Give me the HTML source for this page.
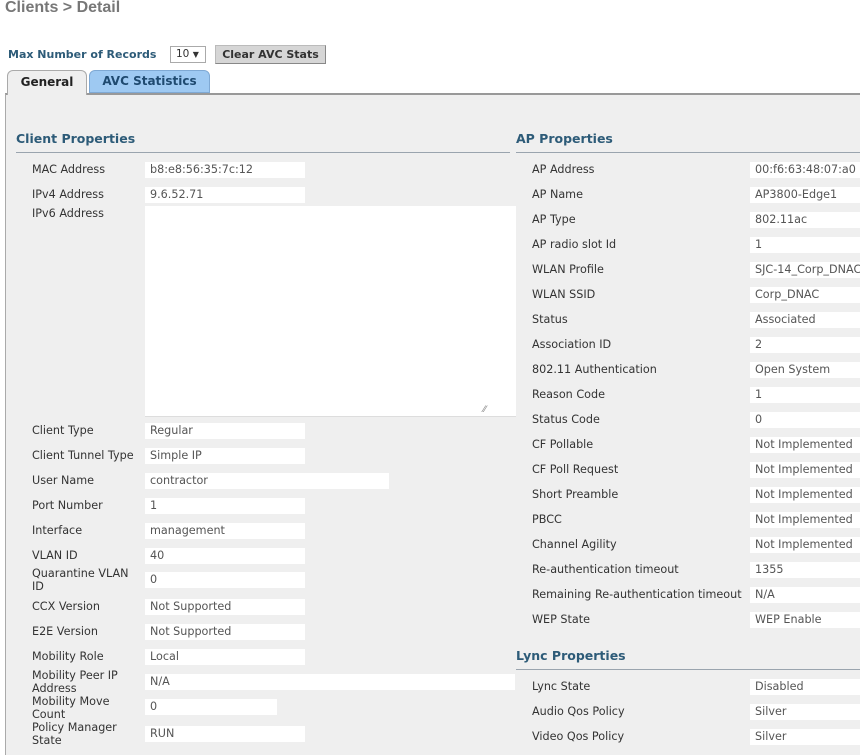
<!DOCTYPE html>
<html><head><meta charset="utf-8"><style>
body{margin:0;width:860px;height:745px;overflow:hidden;background:#fff;font-family:"DejaVu Sans",Verdana,sans-serif;font-size:11.2px;color:#333;position:relative}
.a{position:absolute;white-space:nowrap}
#panel{position:absolute;left:5px;top:93px;width:860px;height:660px;background:#efefef;border-top:2px solid #999;border-left:1px solid #aaa}
.h{position:absolute;font-weight:bold;font-size:12.5px;color:#2d5b78;margin-top:1px}
.ln{position:absolute;height:1px;background:#9aa4ae}
.lb{position:absolute;line-height:13px;margin-top:1px}
.v{position:absolute;background:#fff;height:16px;line-height:16px;padding-left:5px;color:#555;box-sizing:border-box;white-space:nowrap;overflow:hidden;margin-top:1px}
</style></head><body>
<div class="a" style="left:5px;top:-1px;font-family:'Liberation Sans',Arial,sans-serif;font-weight:bold;font-size:16px;line-height:18px;color:#777">Clients &gt; Detail</div>
<div class="a" style="left:8px;top:48px;font-weight:bold;font-size:11px;color:#2d5b78">Max Number of Records</div>
<div class="a" style="left:170px;top:46px;width:36px;height:17px;border:1px solid #aaa;box-sizing:border-box;background:#fff;font-size:10.5px;line-height:15px;padding-left:5px">10 <span style="font-size:8px">▼</span></div>
<div class="a" style="left:215px;top:45px;width:111px;height:19px;background:#d6d6d6;border:1px solid #bbb;border-right-color:#888;border-bottom-color:#888;box-sizing:border-box;font-weight:bold;font-size:11px;line-height:17px;text-align:center;color:#333">Clear AVC Stats</div>
<div id="panel"></div>
<div class="a" style="left:7px;top:70px;width:80px;height:25px;background:#efefef;border:1px solid #aaa;border-bottom:none;border-radius:6px 6px 0 0;box-sizing:border-box;font-weight:bold;font-size:12px;text-align:center;line-height:22px;color:#222">General</div>
<div class="a" style="left:89px;top:70px;width:121px;height:23px;background:#9ec9f2;border:1px solid #7fa9d4;border-radius:6px 6px 0 0;box-sizing:border-box;font-weight:bold;font-size:12px;text-align:center;line-height:21px;color:#1f4a70">AVC Statistics</div>

<div class="h" style="left:16px;top:130px">Client Properties</div>
<div class="ln" style="left:16px;top:152px;width:494px"></div>
<div class="h" style="left:516px;top:130px">AP Properties</div>
<div class="ln" style="left:516px;top:152px;width:344px"></div>

<div class="lb" style="left:32px;top:162px">MAC Address</div><div class="v" style="left:145px;top:161px;width:160px">b8:e8:56:35:7c:12</div>
<div class="lb" style="left:32px;top:187px">IPv4 Address</div><div class="v" style="left:145px;top:186px;width:160px">9.6.52.71</div>
<div class="lb" style="left:32px;top:206px">IPv6 Address</div>
<div class="a" style="left:145px;top:206px;width:371px;height:210px;background:#fff;border-bottom:1px solid #ddd"><span style="position:absolute;right:30px;bottom:1px;color:#888;font-size:9px">⁄⁄</span></div>
<div class="lb" style="left:32px;top:423px">Client Type</div><div class="v" style="left:145px;top:422px;width:160px">Regular</div>
<div class="lb" style="left:32px;top:448px">Client Tunnel Type</div><div class="v" style="left:145px;top:447px;width:160px">Simple IP</div>
<div class="lb" style="left:32px;top:473px">User Name</div><div class="v" style="left:145px;top:472px;width:244px">contractor</div>
<div class="lb" style="left:32px;top:498px">Port Number</div><div class="v" style="left:145px;top:497px;width:160px">1</div>
<div class="lb" style="left:32px;top:523px">Interface</div><div class="v" style="left:145px;top:522px;width:160px">management</div>
<div class="lb" style="left:32px;top:548px">VLAN ID</div><div class="v" style="left:145px;top:547px;width:160px">40</div>
<div class="lb" style="left:32px;top:566px">Quarantine VLAN<br>ID</div><div class="v" style="left:145px;top:571px;width:160px">0</div>
<div class="lb" style="left:32px;top:599px">CCX Version</div><div class="v" style="left:145px;top:598px;width:160px">Not Supported</div>
<div class="lb" style="left:32px;top:624px">E2E Version</div><div class="v" style="left:145px;top:623px;width:160px">Not Supported</div>
<div class="lb" style="left:32px;top:649px">Mobility Role</div><div class="v" style="left:145px;top:648px;width:160px">Local</div>
<div class="lb" style="left:32px;top:668px">Mobility Peer IP<br>Address</div><div class="v" style="left:145px;top:673px;width:370px">N/A</div>
<div class="lb" style="left:32px;top:694px">Mobility Move<br>Count</div><div class="v" style="left:145px;top:698px;width:132px">0</div>
<div class="lb" style="left:32px;top:720px">Policy Manager<br>State</div><div class="v" style="left:145px;top:725px;width:160px">RUN</div>

<div class="lb" style="left:532px;top:162px">AP Address</div><div class="v" style="left:750px;top:161px;width:115px">00:f6:63:48:07:a0</div>
<div class="lb" style="left:532px;top:187px">AP Name</div><div class="v" style="left:750px;top:186px;width:115px">AP3800-Edge1</div>
<div class="lb" style="left:532px;top:212px">AP Type</div><div class="v" style="left:750px;top:211px;width:115px">802.11ac</div>
<div class="lb" style="left:532px;top:237px">AP radio slot Id</div><div class="v" style="left:750px;top:236px;width:115px">1</div>
<div class="lb" style="left:532px;top:262px">WLAN Profile</div><div class="v" style="left:750px;top:261px;width:115px">SJC-14_Corp_DNAC</div>
<div class="lb" style="left:532px;top:287px">WLAN SSID</div><div class="v" style="left:750px;top:286px;width:115px">Corp_DNAC</div>
<div class="lb" style="left:532px;top:312px">Status</div><div class="v" style="left:750px;top:311px;width:115px">Associated</div>
<div class="lb" style="left:532px;top:337px">Association ID</div><div class="v" style="left:750px;top:336px;width:115px">2</div>
<div class="lb" style="left:532px;top:362px">802.11 Authentication</div><div class="v" style="left:750px;top:361px;width:115px">Open System</div>
<div class="lb" style="left:532px;top:387px">Reason Code</div><div class="v" style="left:750px;top:386px;width:115px">1</div>
<div class="lb" style="left:532px;top:412px">Status Code</div><div class="v" style="left:750px;top:411px;width:115px">0</div>
<div class="lb" style="left:532px;top:437px">CF Pollable</div><div class="v" style="left:750px;top:436px;width:115px">Not Implemented</div>
<div class="lb" style="left:532px;top:462px">CF Poll Request</div><div class="v" style="left:750px;top:461px;width:115px">Not Implemented</div>
<div class="lb" style="left:532px;top:487px">Short Preamble</div><div class="v" style="left:750px;top:486px;width:115px">Not Implemented</div>
<div class="lb" style="left:532px;top:512px">PBCC</div><div class="v" style="left:750px;top:511px;width:115px">Not Implemented</div>
<div class="lb" style="left:532px;top:537px">Channel Agility</div><div class="v" style="left:750px;top:536px;width:115px">Not Implemented</div>
<div class="lb" style="left:532px;top:562px">Re-authentication timeout</div><div class="v" style="left:750px;top:561px;width:115px">1355</div>
<div class="lb" style="left:532px;top:587px">Remaining Re-authentication timeout</div><div class="v" style="left:750px;top:586px;width:115px">N/A</div>
<div class="lb" style="left:532px;top:612px">WEP State</div><div class="v" style="left:750px;top:611px;width:115px">WEP Enable</div>

<div class="h" style="left:516px;top:647px">Lync Properties</div>
<div class="ln" style="left:516px;top:669px;width:344px"></div>
<div class="lb" style="left:532px;top:679px">Lync State</div><div class="v" style="left:750px;top:678px;width:115px">Disabled</div>
<div class="lb" style="left:532px;top:704px">Audio Qos Policy</div><div class="v" style="left:750px;top:703px;width:115px">Silver</div>
<div class="lb" style="left:532px;top:729px">Video Qos Policy</div><div class="v" style="left:750px;top:728px;width:115px">Silver</div>
</body></html>
